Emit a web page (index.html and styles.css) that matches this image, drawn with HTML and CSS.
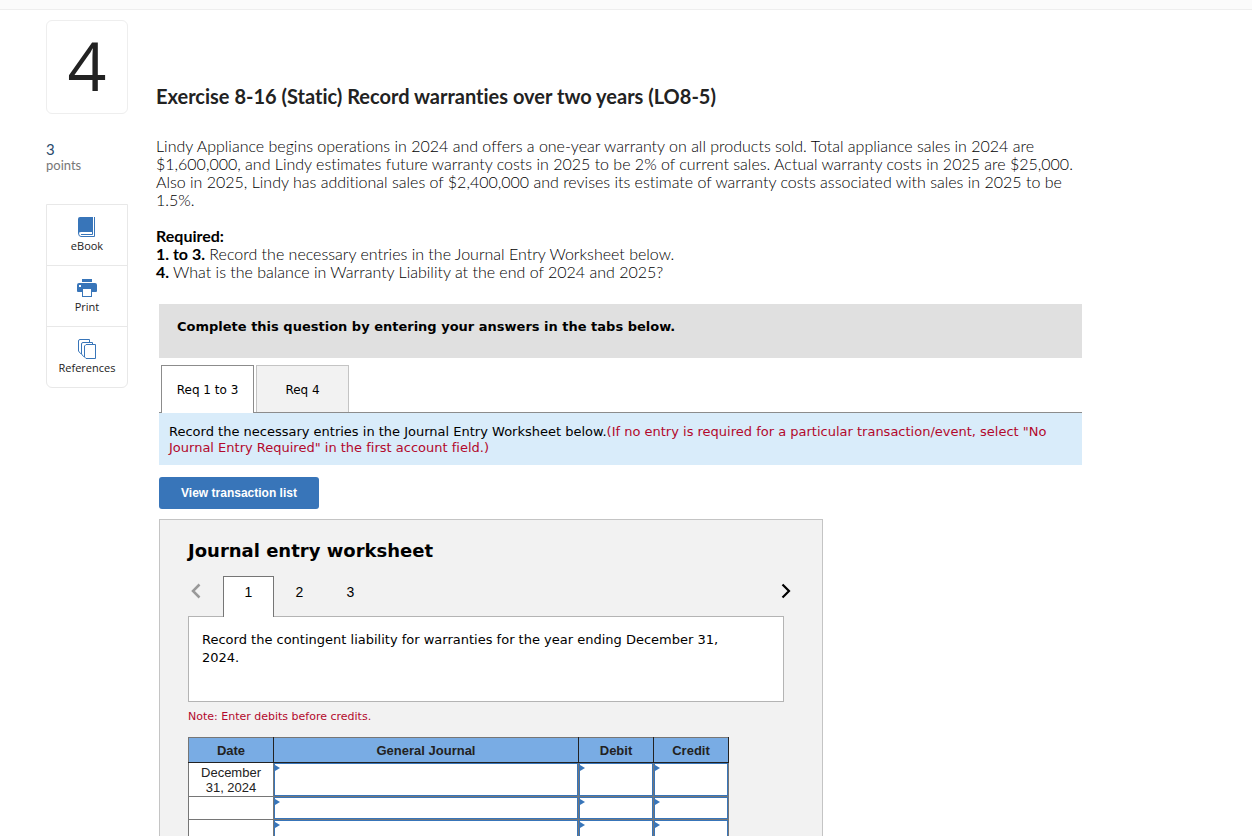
FILE: index.html
```html
<!DOCTYPE html>
<html lang="en">
<head>
    <meta charset="UTF-8">
    <meta name="viewport" content="width=device-width, initial-scale=1.0">
    <title>Exercise 8-16</title>
    <link rel="stylesheet" href="styles.css">
</head>
<body>

    <header class="topbar"></header>

    <div class="page">
        <aside class="sidebar">
            <div class="question-number">4</div>
            <div class="points">
                <span class="points-value">3</span>
                <span class="points-label">points</span>
            </div>
            <nav class="tools">
                <a href="#ebook">
                    <svg width="20" height="20" viewBox="0 0 20 20" fill="none" stroke="#3875b9">
                        <path d="M3 0H16V15H4Q2 15 1 17V2Q1 0 3 0Z" fill="#3875b9" stroke="none"/>
                        <path d="M1.500 16Q1.500 19.500 4 19.500H17.500V0M4 17.500H15.500V14"/>
                    </svg>
                    <span>eBook</span>
                </a>
                <a href="#print">
                    <svg width="20" height="20" viewBox="0 0 20 20">
                        <path d="M5 1H15V4H5ZM2 5H18Q20 5 20 7V13Q20 14 19 14H1Q0 14 0 13V7Q0 5 2 5Z" fill="#3875b9"/>
                        <rect x="5.500" y="10.500" width="9" height="8" fill="#fff" stroke="#3875b9"/>
                        <rect x="2" y="7" width="2" height="2" fill="#fff"/>
                    </svg>
                    <span>Print</span>
                </a>
                <a href="#references">
                    <svg width="20" height="20" viewBox="0 0 20 20" fill="#fff" stroke="#3875b9">
                        <path d="M3 .5H12.500V14.500H3.500L1.500 12V2Q1.500 .5 3 .5Z"/>
                        <path d="M6 3.500H15.500V17.500H6.500L4.500 15V5Q4.500 3.500 6 3.500Z"/>
                        <path d="M9 5.500H18.500V19.500H9L7.500 18V7Z"/>
                    </svg>
                    <span>References</span>
                </a>
            </nav>
        </aside>

        <main class="content">
            <h1>Exercise 8-16 (Static) Record warranties over two years (LO8-5)</h1>

            <div class="question">
                <p>Lindy Appliance begins operations in 2024 and offers a one-year warranty on all products sold. Total appliance sales in 2024 are $1,600,000, and Lindy estimates future warranty costs in 2025 to be 2% of current sales. Actual warranty costs in 2025 are $25,000. Also in 2025, Lindy has additional sales of $2,400,000 and revises its estimate of warranty costs associated with sales in 2025 to be 1.5%.</p>
                <p><b>Required:</b><br>
                <b>1. to 3.</b> Record the necessary entries in the Journal Entry Worksheet below.<br>
                <b>4.</b> What is the balance in Warranty Liability at the end of 2024 and 2025?</p>
            </div>

            <section class="answer">
                <div class="banner">Complete this question by entering your answers in the tabs below.</div>

                <div class="tabs">
                    <button type="button" class="tab active">Req 1 to 3</button>
                    <button type="button" class="tab">Req 4</button>
                </div>
                <p class="instructions">Record the necessary entries in the Journal Entry Worksheet below.<span class="red">(If no entry is required for a particular transaction/event, select "No Journal Entry Required" in the first account field.)</span></p>

                <button type="button" class="view-button">View transaction list</button>

                <div class="worksheet">
                    <h2>Journal entry worksheet</h2>
                    <div class="steps">
                        <button type="button" class="arrow prev" aria-label="Previous">
                            <svg width="12" height="16" viewBox="0 0 12 16" fill="none" stroke="currentColor" stroke-width="2.500"><path d="M9.500 1.500L3 8L9.500 14.500"/></svg>
                        </button>
                        <button type="button" class="step active">1</button>
                        <button type="button" class="step">2</button>
                        <button type="button" class="step">3</button>
                        <button type="button" class="arrow next" aria-label="Next">
                            <svg width="12" height="16" viewBox="0 0 12 16" fill="none" stroke="currentColor" stroke-width="2.200"><path d="M2.500 1.500L9 8L2.500 14.500"/></svg>
                        </button>
                    </div>
                    <div class="description">Record the contingent liability for warranties for the year ending December 31, 2024.</div>
                    <p class="note red">Note: Enter debits before credits.</p>

                    <table class="journal">
                        <thead>
                            <tr>
                                <th class="date">Date</th>
                                <th class="account">General Journal</th>
                                <th class="amount">Debit</th>
                                <th class="amount">Credit</th>
                            </tr>
                        </thead>
                        <tbody>
                            <tr class="first">
                                <td>December 31, 2024</td>
                                <td class="entry"><input type="text" aria-label="Account 1"></td>
                                <td class="entry"><input type="text" aria-label="Debit 1"></td>
                                <td class="entry"><input type="text" aria-label="Credit 1"></td>
                            </tr>
                            <tr>
                                <td></td>
                                <td class="entry"><input type="text" aria-label="Account 2"></td>
                                <td class="entry"><input type="text" aria-label="Debit 2"></td>
                                <td class="entry"><input type="text" aria-label="Credit 2"></td>
                            </tr>
                            <tr>
                                <td></td>
                                <td class="entry"><input type="text" aria-label="Account 3"></td>
                                <td class="entry"><input type="text" aria-label="Debit 3"></td>
                                <td class="entry"><input type="text" aria-label="Credit 3"></td>
                            </tr>
                        </tbody>
                    </table>
                </div>
            </section>
        </main>
    </div>

</body>
</html>
```
FILE: styles.css
```css
* {
    box-sizing: border-box;
}
body {
    margin: 0;
    height: 100vh;
    overflow: hidden;
    background-color: #fff;
    color: #222;
    font-family: Lato, sans-serif;
    font-variant-ligatures: none;
}
h1, h2, p {
    margin: 0;
}
b {
    font-weight: 700;
}
button {
    font-family: inherit;
    cursor: pointer;
}
.topbar {
    height: 10px;
    background-color: #fbfbfb;
    border-bottom: 1px solid #eee;
}
.page {
    display: flex;
    gap: 28px;
    padding: 10px 170px 0 46px;
}

/* left column */
.sidebar {
    flex: 0 0 82px;
}
.question-number {
    height: 94px;
    border: 1px solid #eee;
    border-radius: 6px;
    font-family: "Open Sans", sans-serif;
    font-size: 68px;
    line-height: 88px;
    text-align: center;
}
.points {
    display: flex;
    flex-direction: column;
    margin-top: 27px;
    line-height: 16px;
}
.points-value {
    color: #2a4a6b;
    font-size: 15px;
}
.points-label {
    color: #777;
    font-size: 13px;
}
.tools {
    margin-top: 31px;
    border: 1px solid #e8e8e8;
    border-radius: 0 0 6px 6px;
}
.tools a {
    display: flex;
    flex-direction: column;
    align-items: center;
    gap: 1px;
    padding: 12px 0;
    color: #222;
    font-family: "Open Sans", sans-serif;
    font-size: 11px;
    line-height: 15px;
    text-decoration: none;
}
.tools a + a {
    border-top: 1px solid #e8e8e8;
}

/* question text */
.content {
    flex: 1;
    min-width: 0;
}
h1 {
    margin-top: 63px;
    font-size: 20px;
    line-height: 26px;
}
.question {
    margin-top: 28px;
    color: #000;
    font-size: 16px;
    font-weight: 300;
    line-height: 18px;
}
.question p + p {
    margin-top: 18px;
}

/* answer area */
.answer {
    margin: 23px 0 0 3px;
    color: #000;
    font-family: "DejaVu Sans", sans-serif;
    font-size: 13px;
}
.red {
    color: #b3092c;
}
.banner {
    height: 54px;
    padding: 14px 18px;
    background-color: #e0e0e0;
    font-weight: bold;
    line-height: 18px;
}
.tabs {
    display: flex;
    gap: 2px;
    margin-top: 7px;
    padding-left: 2px;
    border-bottom: 1px solid #8c8c8c;
}
.tab {
    width: 93px;
    height: 47px;
    border: 1px solid #c4c4c4;
    border-bottom: none;
    background-color: #f2f2f2;
    padding: 2px 0 0;
    font-size: 12px;
}
.tab.active {
    height: 48px;
    margin-bottom: -1px;
    padding-top: 1px;
    border-color: #8c8c8c;
    background-color: #fff;
}
.instructions {
    padding: 11px 10px 9px;
    background-color: #d9ecfa;
    line-height: 16px;
}
.view-button {
    display: block;
    width: 160px;
    height: 32px;
    margin-top: 12px;
    border: none;
    border-radius: 3px;
    background-color: #3875b9;
    color: #fff;
    font-family: "Liberation Sans", Arial, sans-serif;
    font-size: 12px;
    font-weight: bold;
}

/* worksheet */
.worksheet {
    max-width: 664px;
    margin-top: 10px;
    padding: 18px 38px 38px 28px;
    border: 1px solid #c4c4c4;
    background-color: #f2f2f2;
}
h2 {
    font-size: 18px;
    line-height: 26px;
}
.steps {
    display: flex;
    margin-top: 12px;
}
.step {
    width: 51px;
    height: 40px;
    padding: 0 0 10px;
    border: 1px solid transparent;
    border-bottom: none;
    background: none;
    font-family: "Liberation Sans", Arial, sans-serif;
    font-size: 14px;
}
.step.active {
    height: 41px;
    margin-bottom: -1px;
    border-color: #767676;
    background-color: #fff;
    z-index: 1;
}
.arrow {
    display: flex;
    width: 35px;
    height: 40px;
    padding: 7px 2px;
    border: none;
    background: none;
}
.prev {
    color: #999;
}
.next {
    width: 16px;
    margin-left: auto;
    margin-right: -10px;
    color: #000;
}
.description {
    height: 86px;
    padding: 14px 48px 14px 13px;
    border: 1px solid #b4b4b4;
    background-color: #fff;
    line-height: 18px;
}
.note {
    margin-top: 7px;
    font-size: 11px;
    line-height: 16px;
}
.journal {
    width: 541px;
    margin-top: 12px;
    border-collapse: collapse;
    table-layout: fixed;
    background-color: #fff;
    color: #222;
    font-family: "Liberation Sans", Arial, sans-serif;
    font-size: 13px;
    line-height: 15px;
}
.journal th, .journal td {
    height: 23px;
    padding: 0;
    border: 1px solid #767676;
    text-align: center;
}
.journal th {
    height: 25px;
    border-color: #767676 #222 #222;
    background-color: #79ace4;
}
.journal .first td {
    height: 34px;
    padding: 0 8px;
}
.journal .date {
    width: 85px;
    border-left-color: #767676;
}
.journal .amount {
    width: 75px;
}
.journal .entry {
    position: relative;
    padding: 0;
}
.journal .entry input {
    display: block;
    width: 100%;
    height: 22px;
    padding: 0 6px;
    border: 1px solid #3875b9;
    background-color: #fff;
    font-size: 13px;
}
.journal .first .entry {
    padding: 0;
}
.journal .first .entry input {
    height: 33px;
}
/* marker in the corner of each editable cell */
.journal .entry::before {
    content: "";
    position: absolute;
    top: 2px;
    left: 1px;
    border: 3px solid transparent;
    border-left: 5px solid #3875b9;
    border-right: none;
}
```
